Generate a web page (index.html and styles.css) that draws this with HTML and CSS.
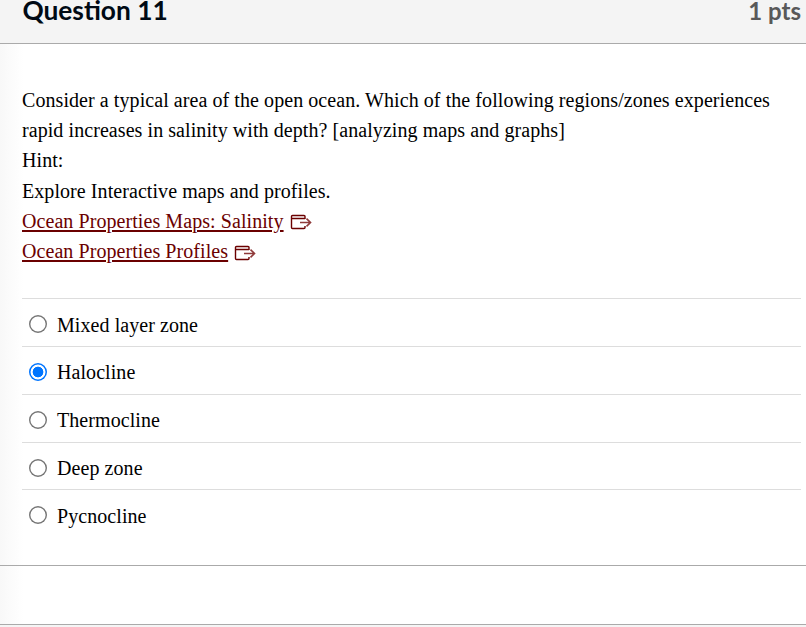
FILE: index.html
```html
<!DOCTYPE html>
<html lang="en">
<head>
<meta charset="utf-8">
<title>Question 11</title>
<link rel="stylesheet" href="styles.css">
</head>
<body>
<section class="question">
  <header class="header"><h1 class="name">Question 11</h1><span class="points">1 pts</span></header>
  <div class="body">
    <div class="text">
      <p>Consider a typical area of the open ocean. Which of the following regions/zones experiences<br>rapid increases in salinity with depth? [analyzing maps and graphs]</p>
      <p>Hint:</p>
      <p>Explore Interactive maps and profiles.</p>
      <p class="link-row"><a href="#">Ocean Properties Maps: Salinity</a><svg class="ext" viewBox="0 0 22 16"><path d="M15 5V2.500a1 1 0 0 0-1-1H2.500a1 1 0 0 0-1 1v11a1 1 0 0 0 1 1H14a1 1 0 0 0 1-1V12M1.500 4.500H15"/><path class="arrow" d="M10 8.500h10.500M16.500 4.700l4 3.800-4 3.800"/></svg></p>
      <p class="link-row"><a href="#">Ocean Properties Profiles</a><svg class="ext" viewBox="0 0 22 16"><path d="M15 5V2.500a1 1 0 0 0-1-1H2.500a1 1 0 0 0-1 1v11a1 1 0 0 0 1 1H14a1 1 0 0 0 1-1V12M1.500 4.500H15"/><path class="arrow" d="M10 8.500h10.500M16.500 4.700l4 3.800-4 3.800"/></svg></p>
    </div>
    <div class="answers">
      <label class="answer"><input type="radio" name="a"><span>Mixed layer zone</span></label>
      <label class="answer"><input type="radio" name="a" checked><span>Halocline</span></label>
      <label class="answer"><input type="radio" name="a"><span>Thermocline</span></label>
      <label class="answer"><input type="radio" name="a"><span>Deep zone</span></label>
      <label class="answer"><input type="radio" name="a"><span>Pycnocline</span></label>
    </div>
  </div>
</section>
<footer class="footer"></footer>
</body>
</html>
```
FILE: styles.css
```css
* { box-sizing: border-box; }
body { margin: 0; height: 627px; overflow: hidden; background: #f5f5f5; color: #000; font-family: "Liberation Serif", serif; font-size: 20px; letter-spacing: 0.07px; }
.question { height: 566px; border-bottom: 1px solid #aaa; background: linear-gradient(90deg, #f8f8f8, #fff 24px); }
.header { display: flex; justify-content: space-between; height: 44px; padding: 0 5px 0 22.4px; background: #f4f4f4; border-bottom: 1px solid #aaa; font-family: Lato, sans-serif; font-weight: 700; line-height: 30px; letter-spacing: 0; }
.name { margin: -5px 0 0; font-size: 26.3px; color: #000a14; }
.points { margin-top: -4px; font-size: 24px; color: #595959; }
.body { padding: 41px 5px 0 22px; }
.text p { margin: 0; line-height: 30.2px; white-space: nowrap; }
.link-row { display: flex; align-items: center; }
.text a { color: #6b0000; text-decoration: underline; text-decoration-thickness: 2px; text-underline-offset: 2px; }
.ext { width: 22px; height: 16px; margin: 3px 0 0 6px; fill: none; stroke: #6b0000; stroke-width: 1.4; }
.arrow { stroke: #8f3a3a; stroke-width: 1.6; }
.answers { margin-top: 32.2px; }
.answer { display: flex; align-items: center; height: 47.75px; padding: 3px 0 0 7px; border-top: 1px solid #ddd; }
.answer span { padding-top: 1.5px; }
.answer input { appearance: none; width: 18px; height: 18px; margin: 0 10px 0 0; border: 0; border-radius: 50%; background: #fff; box-shadow: inset 0 0 0 1.4px #767676; }
.answer input:checked { background: radial-gradient(circle, #0075ff 5px, #fff 5.7px); box-shadow: inset 0 0 0 1.5px #0075ff; }
.footer { height: 59px; border-bottom: 1px solid #aaa; background: linear-gradient(90deg, #f8f8f8, #fff 24px); }
```
